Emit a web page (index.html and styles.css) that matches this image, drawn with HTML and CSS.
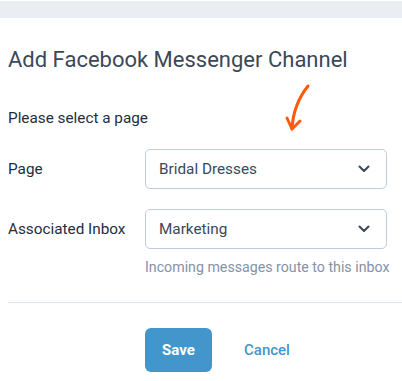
FILE: index.html
```html
<!DOCTYPE html>
<html lang="en">
<head>
  <meta charset="UTF-8" />
  <title>Add Facebook Messenger Channel</title>
  <link rel="stylesheet" href="styles.css">
</head>
<body>
  <div class="topbar"></div>
  <div class="wrap">
    <h2 class="title">Add Facebook Messenger Channel</h2>
    <div class="intro">
      <p>Please select a page</p>
      <svg class="arrow" width="26" height="50" viewBox="0 0 26 50">
        <path d="M23 3 C15 13 8 26 7 46" fill="none" stroke="#ff5a0a" stroke-width="3" stroke-linecap="round"/>
        <path d="M2 35 L7 46 L15 38" fill="none" stroke="#ff5a0a" stroke-width="3" stroke-linecap="round" stroke-linejoin="round"/>
      </svg>
    </div>
    <div class="row">
      <label>Page</label>
      <div class="field">
        <div class="select">
          <span>Bridal Dresses</span>
          <svg width="12" height="8" viewBox="0 0 12 8"><path d="M1.5 1.5 L6 6 L10.5 1.5" fill="none" stroke="#3c4858" stroke-width="2" stroke-linecap="round" stroke-linejoin="round"/></svg>
        </div>
      </div>
    </div>
    <div class="row">
      <label>Associated Inbox</label>
      <div class="field">
        <div class="select">
          <span>Marketing</span>
          <svg width="12" height="8" viewBox="0 0 12 8"><path d="M1.5 1.5 L6 6 L10.5 1.5" fill="none" stroke="#3c4858" stroke-width="2" stroke-linecap="round" stroke-linejoin="round"/></svg>
        </div>
        <p class="help">Incoming messages route to this inbox</p>
      </div>
    </div>
    <hr class="divider">
    <div class="actions">
      <button class="btn-save">Save</button>
      <button class="btn-cancel">Cancel</button>
    </div>
  </div>
</body>
</html>
```

FILE: styles.css
```css
* { margin: 0; padding: 0; box-sizing: border-box; }
body {
  font-family: Roboto, "Liberation Sans", sans-serif;
  color: #1f2d3d;
  background: #fff;
  padding-top: 1px;
}
.topbar {
  height: 17px;
  background: #eaeef2;
}
.wrap { padding: 0 0 0 8px; }
.title {
  font-size: 22px;
  font-weight: 400;
  color: #3c4858;
  margin-top: 29px;
  line-height: 26px;
}
.intro {
  position: relative;
  margin-top: 35px;
  font-size: 15.3px;
  line-height: 20px;
}
.arrow {
  position: absolute;
  left: 277px;
  top: -25px;
}
.row {
  display: flex;
  align-items: flex-start;
  margin-top: 21px;
  font-size: 15.3px;
}
.row + .row { margin-top: 20px; }
.row label {
  width: 137px;
  line-height: 40px;
  color: #1f2d3d;
}
.field { width: 242px; }
.select {
  height: 40px;
  border: 1px solid #c0ccda;
  border-radius: 5px;
  display: flex;
  align-items: center;
  justify-content: space-between;
  padding: 0 16px 0 13px;
  color: #3c4858;
}
.help {
  font-size: 14.2px;
  color: #8492a6;
  margin-top: 10px;
  line-height: 16px;
  white-space: nowrap;
}
.divider {
  border: none;
  border-top: 1px solid #e0e6ed;
  margin-top: 27px;
}
.actions {
  display: flex;
  align-items: center;
  gap: 32px;
  margin-top: 25px;
  padding-left: 137px;
}
.btn-save {
  width: 67px;
  height: 44px;
  border: none;
  border-radius: 6px;
  background: #4396cc;
  color: #fff;
  font-family: inherit;
  font-size: 15px;
  font-weight: 700;
}
.btn-cancel {
  border: none;
  background: none;
  color: #4396cc;
  font-family: inherit;
  font-size: 15px;
  font-weight: 500;
}
```
